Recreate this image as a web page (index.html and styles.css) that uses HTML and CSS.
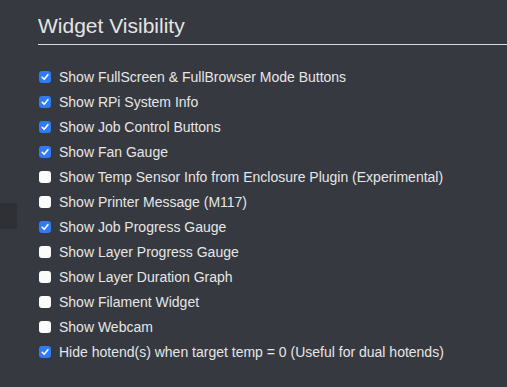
FILE: index.html
```html
<!DOCTYPE html>
<html>
<head>
<meta charset="utf-8">
<link rel="stylesheet" href="styles.css">
</head>
<body>
<div class="side-tab"></div>
<section class="panel">
  <h2 class="title">Widget Visibility</h2>
  <ul class="opts">
    <li class="opt"><span class="box on"><svg viewBox="0 0 12 12"><path d="M3.2 6.3 L5.2 8.3 L8.9 3.7" /></svg></span>Show FullScreen &amp; FullBrowser Mode Buttons</li>
    <li class="opt"><span class="box on"><svg viewBox="0 0 12 12"><path d="M3.2 6.3 L5.2 8.3 L8.9 3.7" /></svg></span>Show RPi System Info</li>
    <li class="opt"><span class="box on"><svg viewBox="0 0 12 12"><path d="M3.2 6.3 L5.2 8.3 L8.9 3.7" /></svg></span>Show Job Control Buttons</li>
    <li class="opt"><span class="box on"><svg viewBox="0 0 12 12"><path d="M3.2 6.3 L5.2 8.3 L8.9 3.7" /></svg></span>Show Fan Gauge</li>
    <li class="opt"><span class="box"></span>Show Temp Sensor Info from Enclosure Plugin (Experimental)</li>
    <li class="opt"><span class="box"></span>Show Printer Message (M117)</li>
    <li class="opt"><span class="box on"><svg viewBox="0 0 12 12"><path d="M3.2 6.3 L5.2 8.3 L8.9 3.7" /></svg></span>Show Job Progress Gauge</li>
    <li class="opt"><span class="box"></span>Show Layer Progress Gauge</li>
    <li class="opt"><span class="box"></span>Show Layer Duration Graph</li>
    <li class="opt"><span class="box"></span>Show Filament Widget</li>
    <li class="opt"><span class="box"></span>Show Webcam</li>
    <li class="opt"><span class="box on"><svg viewBox="0 0 12 12"><path d="M3.2 6.3 L5.2 8.3 L8.9 3.7" /></svg></span>Hide hotend(s) when target temp = 0 (Useful for dual hotends)</li>
  </ul>
</section>
</body>
</html>
```
FILE: styles.css
```css
html, body {
  margin: 0;
  padding: 0;
  background: #363940;
  height: 100%;
  overflow: hidden;
}
body {
  font-family: "Liberation Sans", Arial, sans-serif;
  color: #e6e6e6;
  position: relative;
}
.side-tab {
  position: absolute;
  left: 0;
  top: 203px;
  width: 17px;
  height: 26px;
  background: #2e3036;
}
.panel {
  padding: 14px 0 0 38px;
}
.title {
  margin: 0;
  font-size: 21px;
  line-height: 24px;
  font-weight: normal;
  color: #e4e4e4;
  padding-bottom: 6px;
  border-bottom: 1px solid #dcdcdc;
}
.opts {
  list-style: none;
  margin: 19px 0 0 0;
  padding: 0;
}
.opt {
  display: flex;
  align-items: center;
  height: 25px;
  font-size: 14px;
  white-space: nowrap;
}
.box {
  flex: none;
  width: 12px;
  height: 12px;
  border-radius: 3px;
  background: #fbfbfb;
  margin: 0 8px 0 1px;
  display: flex;
}
.box.on {
  background: #2f7bf5;
}
.box svg {
  width: 12px;
  height: 12px;
  fill: none;
  stroke: #ffffff;
  stroke-width: 1.6;
  stroke-linecap: round;
  stroke-linejoin: round;
}
```
